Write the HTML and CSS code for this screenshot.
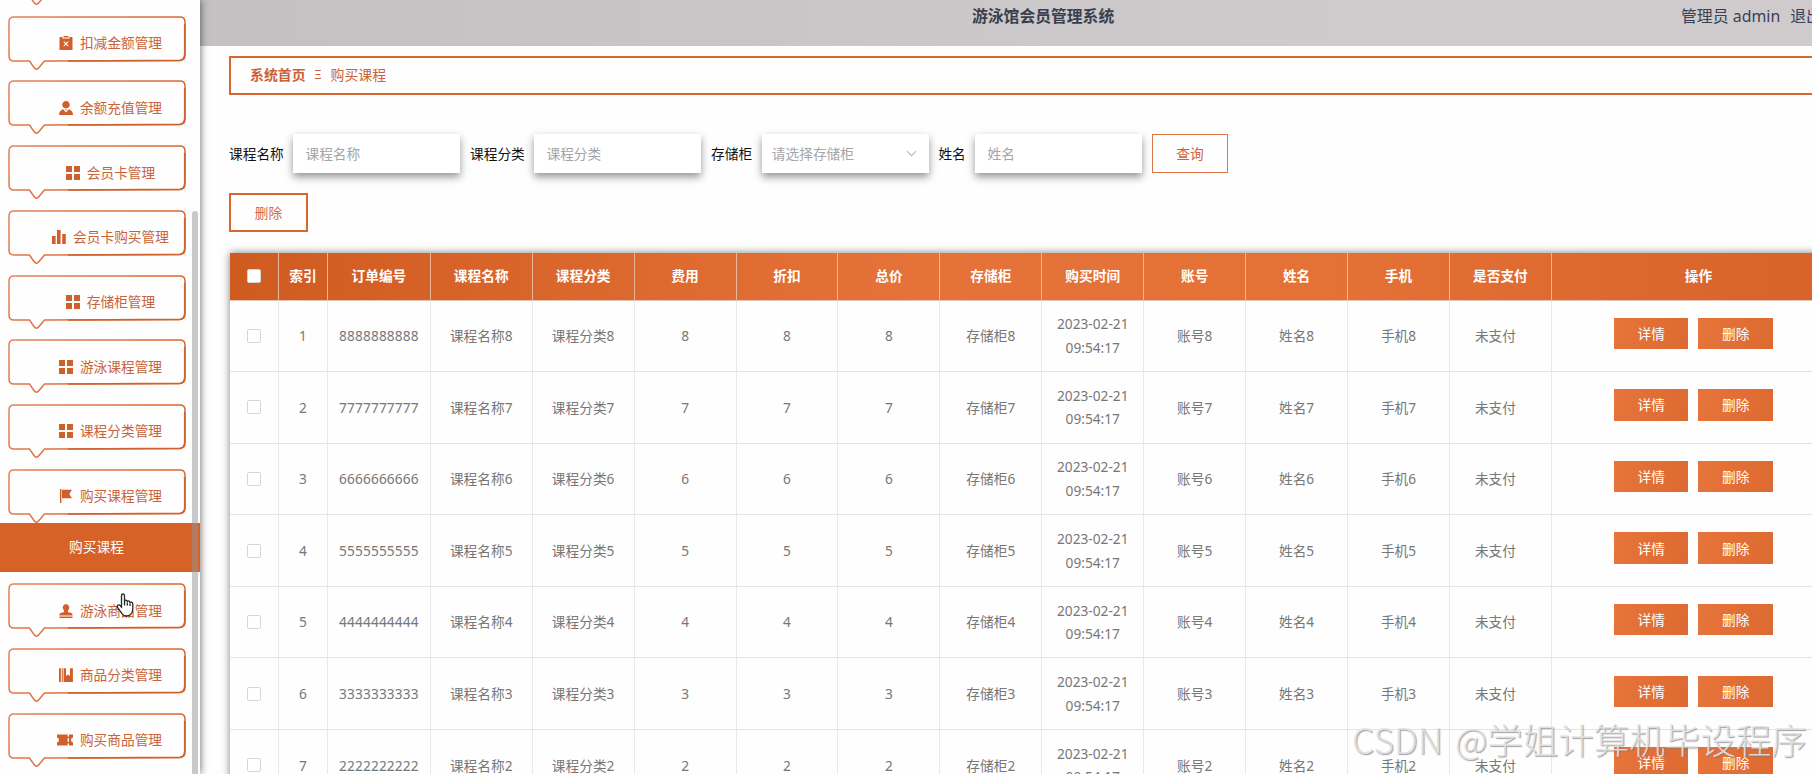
FILE: index.html
```html
<!DOCTYPE html>
<html lang="zh-CN">
<head>
<meta charset="utf-8">
<title>游泳馆会员管理系统</title>
<link rel="stylesheet" href="styles.css">
</head>
<body>
<svg class="defs" width="0" height="0">
  <defs>
    <linearGradient id="edge" x1="0" y1="0" x2="1" y2="0.4"><stop offset="0" stop-color="#e0855a"/><stop offset="1" stop-color="#d9622a"/></linearGradient>
    <symbol id="bubble" viewBox="0 0 178 55"><path d="M6 1H172Q177 1 177 6V39Q177 44 172 44.400L36.500 45L31 51.500Q28.500 55 26 51.500L21.500 45H6Q1 45 1 40V6Q1 1 6 1Z" fill="#fffefe" stroke="url(#edge)" stroke-width="1.500"/><path d="M60 45L172 44.400Q176.500 44 176.700 38V8" fill="none" stroke="#cf632f" stroke-width="1.600"/></symbol>
    <symbol id="grid" viewBox="0 0 14 14"><path d="M0 0h6v6H0zM8 0h6v6H8zM0 8h6v6H0zM8 8h6v6H8z"/></symbol>
    <symbol id="clip" viewBox="0 0 14 14"><path fill-rule="evenodd" d="M.5 1H3.500V2.500H10.500V1H13.500V14H.5ZM4.300 5.600L6.100 7.900L4.200 10.300H5.500L7 8.600L8.500 10.300H9.900L7.900 7.900L9.800 5.600H8.500L7 7.100L5.600 5.600Z"/><path d="M4.500 0h5v1.500h-5z"/></symbol>
    <symbol id="user" viewBox="0 0 14 14"><path d="M7 0A3.600 3.800 0 0 1 9.800 6.300Q8.600 7.400 7 7.400T4.200 6.300A3.600 3.800 0 0 1 7 0ZM0 14Q.2 9.200 4.200 8.300L7 11.400L9.800 8.300Q13.800 9.200 14 14Z"/><path d="M6.100 8.300h1.800L7 10z"/></symbol>
    <symbol id="bars" viewBox="0 0 14 14"><path d="M0 6h3.600v8H0zM5 0h3.600v14H5zM10.200 4h3.600v10h-3.600z"/></symbol>
    <symbol id="flag" viewBox="0 0 14 14"><path d="M1 0h1.400v14H1zM3 .8H13L10.300 5L13 9.200H3z"/></symbol>
    <symbol id="stamp" viewBox="0 0 14 14"><path d="M7 0A3.600 3.600 0 0 1 9.300 6Q8.500 7.500 9 8.100L13 9.300Q13.600 10 13.600 11.500H.4Q.4 10 1 9.300L5 8.100Q5.500 7.500 4.700 6A3.600 3.600 0 0 1 7 0ZM.4 12.600h13.200V14H.4z"/></symbol>
    <symbol id="book" viewBox="0 0 14 14"><path d="M0 .3h1.900v13.700H0zM2.800 .3H3.800V14H2.800zM4.600 .3H7V8L9 6.500L11 8V.3H13.900V14H4.600z"/></symbol>
    <symbol id="ticket" viewBox="0 0 16 12"><path fill-rule="evenodd" d="M0 .5H10.600V2.500H12V.5H16V3.500Q14 4 14 6T16 8.500V11.500H12V9.500H10.600V11.500H0V8.500Q2 8 2 6T0 3.500ZM10.600 4.300V7.700H12V4.300Z"/></symbol>
  </defs>
</svg>
<div class="app">
  <aside class="sidebar" id="sidebar"></aside>
  <main class="main">
    <header class="topbar">
      <h1 class="brand">游泳馆会员管理系统</h1>
      <div class="account"><span>管理员 admin</span><span>退出</span></div>
    </header>
    <div class="content">
      <nav class="crumbs"><b>系统首页</b><i>Ξ</i><span>购买课程</span></nav>
      <form class="search">
        <label>课程名称</label><div class="field">课程名称</div>
        <label>课程分类</label><div class="field">课程分类</div>
        <label>存储柜</label><div class="field select">请选择存储柜<svg class="chev" viewBox="0 0 12 7"><path d="M1 .8L6 5.800L11 .8"/></svg></div>
        <label>姓名</label><div class="field">姓名</div>
        <button type="button" class="query">查询</button>
      </form>
      <button type="button" class="remove">删除</button>
      <table class="orders">
        <colgroup><col class="c-check"><col class="c-index"><col class="c-order"><col span="11" class="c-data"><col class="c-ops"></colgroup>
        <thead><tr><th><span class="box"></span></th><th>索引</th><th>订单编号</th><th>课程名称</th><th>课程分类</th><th>费用</th><th>折扣</th><th>总价</th><th>存储柜</th><th>购买时间</th><th>账号</th><th>姓名</th><th>手机</th><th>是否支付</th><th>操作</th></tr></thead>
        <tbody id="rows"></tbody>
      </table>
    </div>
  </main>
  <svg class="cursor" viewBox="0 0 19 24"><path d="M5.500 14V3Q5.500 1 7 1T8.500 3V9Q8.600 7 10 7.200T11.300 9Q11.600 7.600 12.800 7.900T14 10Q14.400 8.800 15.500 9.200T16.800 11V16Q16.800 19.500 14.800 21.300Q13.500 23 10.500 23Q7.500 23 6 20.500L1.500 14.500Q.7 12.700 2 12Q3.300 11.600 4.300 12.700Z"/><path d="M8.500 9v3.500M11.300 9.500v3M14 10.500v2.500"/></svg>
  <div class="watermark"><span>CSDN</span><span>@学姐计算机毕设程序</span></div>
</div>
<script src="app.js"></script>
</body>
</html>
```
FILE: styles.css
```css
* { box-sizing: border-box; }
body { margin: 0; overflow: hidden; background: #fefefe; font: 13.7px/20px "Noto Sans", "Noto Sans CJK SC", sans-serif; }
button { font: inherit; padding: 0; }
.defs { position: absolute; }
.app { position: relative; display: flex; width: 1812px; height: 774px; overflow: hidden; }

.sidebar { position: relative; z-index: 2; flex: 0 0 200px; height: 774px; overflow: hidden; background: #fffefe; box-shadow: 1px 0 7px rgba(0, 0, 0, .5); }
.menu { margin-top: -48.900px; }
.item { display: grid; height: 64.700px; padding-left: 8px; color: #cb6238; }
.bubble, .label { grid-area: 1 / 1; }
.bubble { width: 178px; height: 55px; }
.label { display: flex; justify-content: center; align-items: center; gap: 7px; width: 205px; height: 55px; color: #c9633a; }
.icon { width: 14px; height: 14px; fill: #cf5f2b; }
.icon.i-ticket { width: 16px; height: 12px; margin-left: -2px; }
.sub { height: 49px; margin: -10px 0 11px; padding-right: 7px; background: #d66228; color: #fff; text-align: center; line-height: 48px; }
.thumb { position: absolute; top: 211px; left: 192px; width: 6px; height: 580px; border-radius: 3px 3px 0 0; background: rgba(144, 147, 153, .5); }

.main { flex: 0 0 1645px; }
.topbar { display: flex; justify-content: space-between; height: 46px; padding: 4px 24px 0 772px; background: linear-gradient(90deg, #c3c1c2, #cfcbcd 70%, #cfcbcd); color: #3b4154; font-size: 15.900px; line-height: 24px; }
.brand { margin: 0; font-size: 15.800px; font-weight: 600; color: #3a3f50; line-height: 24px; }
.account { display: flex; gap: 10px; }
.content { padding: 9.500px 0 0 29px; }
.crumbs { display: flex; align-items: center; height: 39.500px; padding-left: 19px; border: 2px solid #d9652f; color: #c9623a; background: #fffefe; font-size: 13.900px; }
.crumbs i { width: 25px; text-align: center; font-style: normal; font-size: 12px; }
.crumbs b { font-weight: 700; }

.search { display: flex; align-items: center; gap: 9.700px; height: 39px; margin-top: 39px; color: #111; }
.field { display: flex; align-items: center; justify-content: space-between; width: 166.900px; height: 39px; padding: 0 12px; background: #fff; color: #a3a5a9; box-shadow: 0 4px 8px rgba(0, 0, 0, .42); }
.field.select { padding-left: 10px; }
.chev { width: 11px; height: 7px; fill: none; stroke: #b4b7bd; stroke-width: 1.200; }
.query { width: 76px; height: 39px; border: 1px solid #dc7548; background: #fffefe; color: #cf6238; }
.remove { display: block; width: 79px; height: 39px; margin-top: 20px; border: 2px solid #d9652f; background: #fffefe; color: #cf6b48; }

.orders { width: 1616px; margin: 21px 0 0 1px; border-collapse: separate; border-spacing: 0; table-layout: fixed; background: #fefefe; color: #777; text-align: center; box-shadow: 0 0 8px rgba(0, 0, 0, .5); }
.c-check, .c-index { width: 49px; }
.c-order { width: 102.700px; }
.c-data { width: 101.900px; }
.c-ops { width: 294px; }
.orders thead { background: linear-gradient(90deg, #d05b21, #e57238 42%, #e47136 68%, #d7622a); }
.orders th { height: 47.500px; padding: 0; border-right: 1px solid #eab899; border-bottom: 1px solid #e2c7b8; color: #fff; font-weight: 700; }
.orders td { height: 71.600px; padding: 0; border-right: 1px solid #e9e9eb; border-bottom: 1px solid #e4e4e6; line-height: 23.500px; }
.orders td.num { letter-spacing: .15px; }
.orders td.pay { padding-right: 10px; }
.box { display: block; width: 14px; height: 14px; margin: 0 auto; border: 1px solid #d5d6da; border-radius: 2px; background: #fff; }
.ops { display: flex; gap: 10px; padding: 0 0 5px 62px; }
.ops button { width: 74.500px; height: 31.500px; border: 0; background: linear-gradient(100deg, #e6743b, #dd6a30); color: #fff; line-height: 31px; }

.cursor { position: absolute; z-index: 3; left: 116px; top: 593px; width: 19px; height: 24px; fill: #fff; stroke: #24252b; stroke-width: 1.300; }
.watermark { position: absolute; z-index: 3; left: 1352px; top: 713px; display: flex; gap: 12px; white-space: nowrap; font: 300 35.500px/52px "Noto Sans CJK SC", sans-serif; color: rgba(228, 228, 230, .88); text-shadow: 1px 1px 1px rgba(120, 120, 124, .7); }
```
FILE: app.js
```js
const use = (id, cls) => `<svg class="${cls}"><use href="#${id}"/></svg>`;
const menu = [
  ['grid', ''], ['clip', '扣减金额管理'], ['user', '余额充值管理'], ['grid', '会员卡管理'],
  ['bars', '会员卡购买管理'], ['grid', '存储柜管理'], ['grid', '游泳课程管理'], ['grid', '课程分类管理'],
  ['flag', '购买课程管理'], ['stamp', '游泳商品管理'], ['book', '商品分类管理'], ['ticket', '购买商品管理']
];
document.getElementById('sidebar').innerHTML = '<div class="menu">' + menu.map(([icon, text]) =>
  `<div class="item">${use('bubble', 'bubble')}<div class="label">${text ? use(icon, 'icon i-' + icon) + `<span>${text}</span>` : ''}</div></div>` +
  (icon === 'flag' ? '<div class="sub">购买课程</div>' : '')
).join('') + '</div><div class="thumb"></div>';

document.getElementById('rows').innerHTML = [8, 7, 6, 5, 4, 3, 2].map((n, i) => {
  const cells = [`课程名称${n}`, `课程分类${n}`, n, n, n, `存储柜${n}`, '2023-02-21<br>09:54:17', `账号${n}`, `姓名${n}`, `手机${n}`];
  return `<tr><td><span class="box"></span></td><td>${i + 1}</td><td class="num">${String(n).repeat(10)}</td>` +
    cells.map(c => `<td>${c}</td>`).join('') +
    '<td class="pay">未支付</td><td><div class="ops"><button>详情</button><button>删除</button></div></td></tr>';
}).join('');
```
